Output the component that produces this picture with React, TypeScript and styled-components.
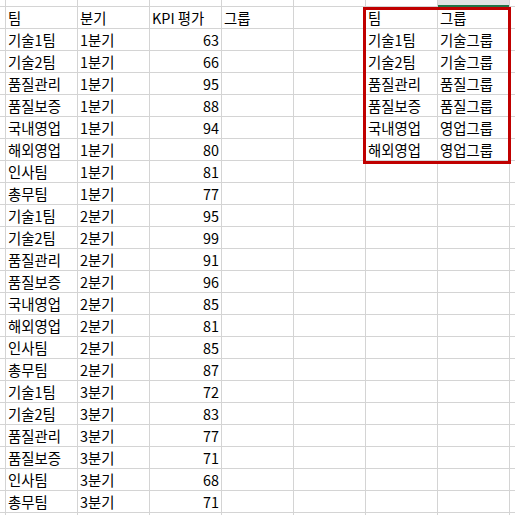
import React from "react";
import styled, { createGlobalStyle } from "styled-components";

const Global = createGlobalStyle`
  html, body { margin: 0; padding: 0; background: #ffffff; }
  body { width: 515px; height: 515px; overflow: hidden; }
  #root { width: 515px; height: 515px; overflow: hidden; }
`;

const Frame = styled.div`
  position: relative;
  width: 515px;
  height: 515px;
  overflow: hidden;
`;

const Sheet = styled.div`
  display: grid;
  grid-template-columns: 5px repeat(7, 71px) 5px;
  grid-auto-rows: 21px;
  grid-template-rows: 6px;
  gap: 1px;
  background: #d4d4d4;
  width: 515px;
  font-family: "Noto Sans CJK KR", "Noto Sans", sans-serif;
  font-size: 14.4px;
  color: #000000;
`;

const ColHead = styled.div<{ $selected?: boolean }>`
  background: ${(p) => (p.$selected ? "#e1e1e1" : "#ffffff")};
  box-shadow: ${(p) => (p.$selected ? "inset 0 -1px 0 #217346, 0 1px 0 #217346" : "none")};
  position: relative;
  z-index: ${(p) => (p.$selected ? 1 : 0)};
`;

const RowHead = styled.div`
  background: #ffffff;
`;

const Cell = styled.div<{ $num?: boolean }>`
  background: #ffffff;
  display: flex;
  align-items: center;
  justify-content: ${(p) => (p.$num ? "flex-end" : "flex-start")};
  padding: 1px 2px 0 2px;
  line-height: 20px;
  white-space: nowrap;
  overflow: hidden;
  box-sizing: border-box;
`;

const Highlight = styled.div`
  position: absolute;
  left: 363px;
  top: 7px;
  width: 148px;
  height: 157px;
  border: 3px solid #c00000;
  box-sizing: border-box;
  pointer-events: none;
  z-index: 2;
`;

type Row = [string, string, string | number, string, string, string, string];

const data: Array<[string, string, number]> = [
  ["기술1팀", "1분기", 63],
  ["기술2팀", "1분기", 66],
  ["품질관리", "1분기", 95],
  ["품질보증", "1분기", 88],
  ["국내영업", "1분기", 94],
  ["해외영업", "1분기", 80],
  ["인사팀", "1분기", 81],
  ["총무팀", "1분기", 77],
  ["기술1팀", "2분기", 95],
  ["기술2팀", "2분기", 99],
  ["품질관리", "2분기", 91],
  ["품질보증", "2분기", 96],
  ["국내영업", "2분기", 85],
  ["해외영업", "2분기", 81],
  ["인사팀", "2분기", 85],
  ["총무팀", "2분기", 87],
  ["기술1팀", "3분기", 72],
  ["기술2팀", "3분기", 83],
  ["품질관리", "3분기", 77],
  ["품질보증", "3분기", 71],
  ["인사팀", "3분기", 68],
  ["총무팀", "3분기", 71],
];

const lookup: Array<[string, string]> = [
  ["팀", "그룹"],
  ["기술1팀", "기술그룹"],
  ["기술2팀", "기술그룹"],
  ["품질관리", "품질그룹"],
  ["품질보증", "품질그룹"],
  ["국내영업", "영업그룹"],
  ["해외영업", "영업그룹"],
];

export default function App() {
  const rows: Row[] = [];
  rows.push(["팀", "분기", "KPI 평가", "그룹", "", lookup[0][0], lookup[0][1]]);
  data.forEach((d, i) => {
    const lk = lookup[i + 1];
    rows.push([d[0], d[1], d[2], "", "", lk ? lk[0] : "", lk ? lk[1] : ""]);
  });
  rows.push(["", "", "", "", "", "", ""]);

  return (
    <>
      <Global />
      <Frame>
        <Sheet>
          <RowHead />
          {Array.from({ length: 7 }).map((_, i) => (
            <ColHead key={`h${i}`} $selected={i === 6} />
          ))}
          <ColHead />
          {rows.map((r, ri) => (
            <React.Fragment key={ri}>
              <RowHead />
              {r.map((v, ci) => (
                <Cell key={ci} $num={typeof v === "number"}>
                  {v}
                </Cell>
              ))}
              <Cell />
            </React.Fragment>
          ))}
        </Sheet>
        <Highlight />
      </Frame>
    </>
  );
}
